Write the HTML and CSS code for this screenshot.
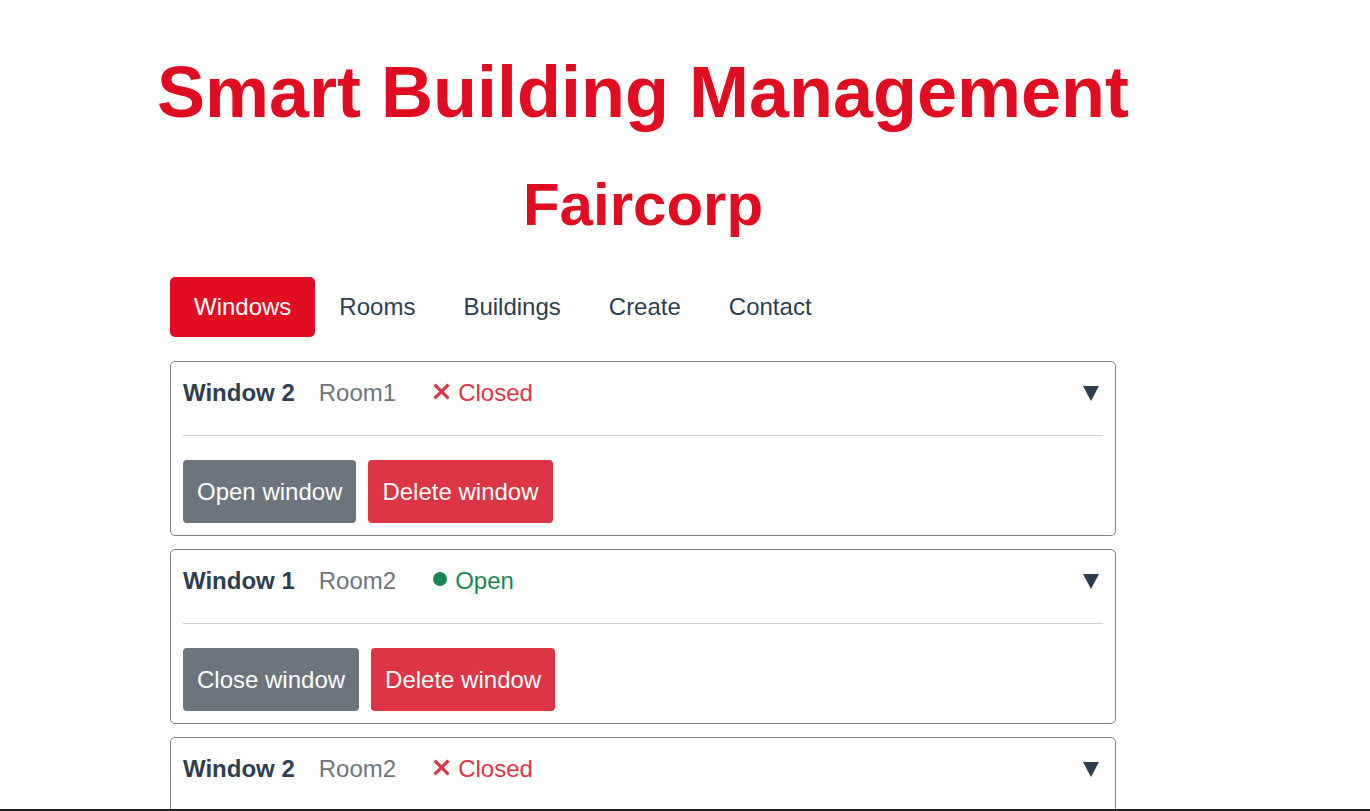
FILE: index.html
```html
<!DOCTYPE html>
<html lang="en">
<head>
<meta charset="utf-8">
<title>Faircorp</title>
<link rel="stylesheet" href="styles.css">
</head>
<body>
<div class="page">
  <header class="masthead">
    <h1 class="title">Smart Building Management</h1>
    <h2 class="subtitle">Faircorp</h2>
  </header>
  <nav class="tabs">
    <a class="tab active" href="#">Windows</a>
    <a class="tab" href="#">Rooms</a>
    <a class="tab" href="#">Buildings</a>
    <a class="tab" href="#">Create</a>
    <a class="tab" href="#">Contact</a>
  </nav>
  <div class="cards">
    <section class="card">
      <div class="card-head">
        <span class="win-name">Window 2</span>
        <span class="room">Room1</span>
        <span class="status closed"><svg class="ico-x" viewBox="0 0 16 16" width="17" height="17"><path d="M1.5 1.5 L14.5 14.5 M14.5 1.5 L1.5 14.5" stroke="#dc3545" stroke-width="3" stroke-linecap="butt"/></svg>Closed</span>
        <svg class="caret" viewBox="0 0 16 16" width="16" height="16"><polygon points="0,1 16,1 8,16" fill="#2c3e50"/></svg>
      </div>
      <hr class="divider">
      <div class="actions">
        <button class="btn btn-gray">Open window</button>
        <button class="btn btn-red">Delete window</button>
      </div>
    </section>
    <section class="card">
      <div class="card-head">
        <span class="win-name">Window 1</span>
        <span class="room">Room2</span>
        <span class="status open"><span class="dot"></span>Open</span>
        <svg class="caret" viewBox="0 0 16 16" width="16" height="16"><polygon points="0,1 16,1 8,16" fill="#2c3e50"/></svg>
      </div>
      <hr class="divider">
      <div class="actions">
        <button class="btn btn-gray">Close window</button>
        <button class="btn btn-red">Delete window</button>
      </div>
    </section>
    <section class="card">
      <div class="card-head">
        <span class="win-name">Window 2</span>
        <span class="room">Room2</span>
        <span class="status closed"><svg class="ico-x" viewBox="0 0 16 16" width="17" height="17"><path d="M1.5 1.5 L14.5 14.5 M14.5 1.5 L1.5 14.5" stroke="#dc3545" stroke-width="3" stroke-linecap="butt"/></svg>Closed</span>
        <svg class="caret" viewBox="0 0 16 16" width="16" height="16"><polygon points="0,1 16,1 8,16" fill="#2c3e50"/></svg>
      </div>
      <hr class="divider">
      <div class="actions">
        <button class="btn btn-gray">Open window</button>
        <button class="btn btn-red">Delete window</button>
      </div>
    </section>
  </div>
</div>
<div class="edge"></div>
</body>
</html>
```

FILE: styles.css
```css
html, body {
  margin: 0;
  padding: 0;
  background: #ffffff;
}
body {
  font-family: "Liberation Sans", Arial, sans-serif;
  color: #2c3e50;
}
.page {
  width: 946px;
  margin-left: 170px;
  padding-top: 52px;
}
.masthead {
  display: flex;
  flex-direction: column;
  align-items: center;
}
.title {
  margin: 0;
  font-size: 72px;
  font-weight: bold;
  line-height: 80px;
  color: #e00d21;
  white-space: nowrap;
}
.subtitle {
  margin: 39px 0 0 0;
  font-size: 60px;
  font-weight: bold;
  line-height: 67px;
  color: #e00d21;
  white-space: nowrap;
}
.tabs {
  display: flex;
  margin-top: 39px;
}
.tab {
  display: block;
  padding: 12px 24px;
  font-size: 24px;
  line-height: 36px;
  color: #2c3e50;
  text-decoration: none;
  border-radius: 5px;
}
.tab.active {
  background: #e10d22;
  color: #ffffff;
}
.cards {
  margin-top: 24px;
  display: flex;
  flex-direction: column;
  gap: 13px;
}
.card {
  border: 1px solid #808080;
  border-radius: 5px;
  padding: 12px;
  background: #fff;
}
.card-head {
  display: flex;
  align-items: center;
  gap: 24px;
  font-size: 24px;
  line-height: 37px;
}
.win-name {
  font-weight: bold;
  color: #2c3e50;
}
.room {
  color: #6c757d;
}
.status {
  display: flex;
  align-items: center;
  margin-left: 13px;
}
.status.closed {
  color: #dc3545;
  gap: 8px;
}
.status.open {
  color: #198754;
  gap: 8px;
}
.ico-x {
  display: block;
  margin-top: -2px;
}
.dot {
  display: block;
  width: 14px;
  height: 14px;
  border-radius: 50%;
  background: #198754;
  margin-top: -4px;
}
.caret {
  display: block;
  margin-left: auto;
  margin-right: 4px;
}
.divider {
  margin: 24px 0;
  border: 0;
  border-top: 1px solid #cfcfcf;
  height: 0;
}
.actions {
  display: flex;
  gap: 12px;
}
.btn {
  font-family: "Liberation Sans", Arial, sans-serif;
  font-size: 24px;
  line-height: 36px;
  padding: 13.5px 14px;
  border: 0;
  border-radius: 4px;
  color: #ffffff;
  cursor: pointer;
}
.btn-gray {
  background: #6c757d;
}
.btn-red {
  background: #dc3545;
}
.edge {
  position: fixed;
  left: 0;
  right: 0;
  bottom: 0;
  height: 2px;
  background: #1e1e1e;
}
```
